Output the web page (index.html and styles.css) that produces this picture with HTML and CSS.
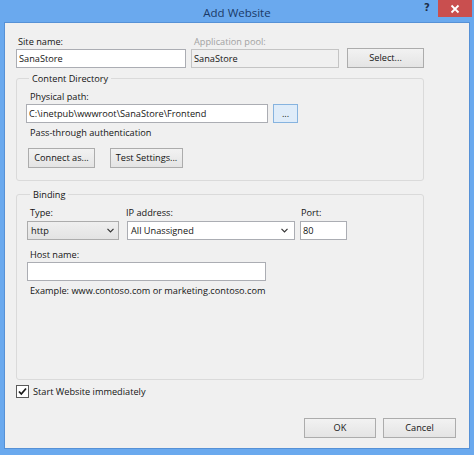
FILE: index.html
```html
<!DOCTYPE html>
<html>
<head>
<meta charset="utf-8">
<link rel="stylesheet" href="styles.css">
</head>
<body>
<div class="window">
  <div class="titlebar">
    <div></div>
    <div class="title">Add Website</div>
    <div class="controls">
      <span class="help">?</span>
      <span class="close"><svg width="10" height="10" viewBox="0 0 10 10"><path d="M1.5 1.5 L8.5 8.5 M8.5 1.5 L1.5 8.5" stroke="#fff" stroke-width="1.8" fill="none"/></svg></span>
    </div>
  </div>
  <div class="client">
    <div class="row-top">
      <div class="field f-site">
        <div class="label l-site">Site name:</div>
        <div class="textbox w-site">SanaStore</div>
      </div>
      <div class="field f-pool">
        <div class="label label-disabled l-pool">Application pool:</div>
        <div class="textbox readonly w-pool">SanaStore</div>
      </div>
      <button class="btn btn-select">Select...</button>
    </div>

    <div class="group group-content">
      <div class="group-title">Content Directory</div>
      <div class="label l-indent">Physical path:</div>
      <div class="path-row">
        <div class="textbox w-path">C:\inetpub\wwwroot\SanaStore\Frontend</div>
        <button class="btn btn-browse">...</button>
      </div>
      <div class="label l-indent l-pass">Pass-through authentication</div>
      <div class="btn-row">
        <button class="btn btn-connect">Connect as...</button>
        <button class="btn btn-test">Test Settings...</button>
      </div>
    </div>

    <div class="group group-binding">
      <div class="group-title">Binding</div>
      <div class="binding-row">
        <div class="field">
          <div class="label l-type">Type:</div>
          <div class="select select-gray w-type"><span>http</span><svg class="chev" width="7" height="5" viewBox="0 0 7 5"><path d="M0.5 0.8 L3.5 3.8 L6.5 0.8" stroke="#333" stroke-width="1.2" fill="none"/></svg></div>
        </div>
        <div class="field f-ip">
          <div class="label l-ip">IP address:</div>
          <div class="select w-ip"><span>All Unassigned</span><svg class="chev" width="7" height="5" viewBox="0 0 7 5"><path d="M0.5 0.8 L3.5 3.8 L6.5 0.8" stroke="#333" stroke-width="1.2" fill="none"/></svg></div>
        </div>
        <div class="field f-port">
          <div class="label l-port">Port:</div>
          <div class="textbox w-port">80</div>
        </div>
      </div>
      <div class="label l-type l-host">Host name:</div>
      <div class="textbox w-host"></div>
      <div class="label l-type l-example">Example: www.contoso.com or marketing.contoso.com</div>
    </div>

    <div class="check-row">
      <span class="checkbox"><svg width="11" height="11" viewBox="0 0 11 11"><path d="M2 5.5 L4.3 8 L9 2.5" stroke="#1a1a1a" stroke-width="1.8" fill="none"/></svg></span>
      <span class="check-label">Start Website immediately</span>
    </div>

    <div class="dialog-buttons">
      <button class="btn btn-ok">OK</button>
      <button class="btn btn-cancel">Cancel</button>
    </div>
  </div>
</div>
</body>
</html>
```

FILE: styles.css
```css
* { box-sizing: border-box; }
html, body { margin: 0; padding: 0; }
body {
  width: 474px;
  height: 455px;
  overflow: hidden;
  font-family: "Open Sans", "Noto Sans", sans-serif;
  font-size: 9.2px;
  color: #141414;
}
.window {
  width: 474px;
  height: 455px;
  background: #6aa9ee;
  padding: 0 5px 7px 5px;
}
.titlebar {
  height: 23px;
  display: grid;
  grid-template-columns: 1fr auto 1fr;
  align-items: start;
}
.title {
  font-size: 11.5px;
  line-height: 23px;
  color: #1a3a68;
  padding-top: 1px;
}
.controls {
  display: flex;
  justify-content: flex-end;
  align-items: flex-start;
  margin-right: -3px;
}
.help {
  font-family: "DejaVu Sans", sans-serif;
  font-weight: bold;
  font-size: 10px;
  line-height: 16px;
  color: #1c2f4a;
  width: 14px;
  text-align: center;
  margin-right: 4px;
}
.close {
  width: 34px;
  height: 17px;
  background: #c94f4f;
  display: flex;
  align-items: center;
  justify-content: center;
}
.client {
  background: #f0f0f0;
  height: 425px;
  padding: 11px 13px 9px 11px;
  box-shadow: 0 0 0 1px rgba(50, 100, 170, 0.35);
}
.label {
  line-height: 15px;
  white-space: nowrap;
}
.label-disabled { color: #a2a2a2; }
.l-site { padding-left: 2px; }
.l-pool { padding-left: 3px; }
.row-top {
  display: flex;
  align-items: flex-end;
}
.textbox {
  height: 19px;
  border: 1px solid #abadb3;
  background: #fff;
  line-height: 17px;
  padding: 0 2px;
  white-space: nowrap;
  overflow: hidden;
}
.textbox.readonly { background: #f0f0f0; border-color: #c4c4c4; }
.w-site { width: 170px; }
.f-pool { margin-left: 5px; }
.w-pool { width: 148px; }
.btn {
  font-family: inherit;
  font-size: 9.2px;
  color: #141414;
  height: 20px;
  padding: 0;
  border: 1px solid #acacac;
  background: linear-gradient(#f2f2f2, #e4e4e4);
  line-height: 18px;
  text-align: center;
  white-space: nowrap;
}
.btn-select { width: 77px; margin-left: 8px; }

.group {
  width: 408px;
  border: 1px solid #dadada;
  border-radius: 3px;
}
.group-title {
  width: max-content;
  line-height: 15px;
  margin: -8px 0 3px 3px;
  padding: 0 3px;
  background: #f0f0f0;
}
.group-content {
  margin-top: 10px;
  padding: 0 0 12px 9px;
}
.l-indent { padding-left: 4px; }
.path-row { display: flex; }
.w-path { width: 242px; }
.btn-browse {
  width: 25px;
  height: 19px;
  line-height: 15px;
  margin-left: 5px;
  border-color: #86b3df;
  background: #dfecf9;
}
.l-pass { margin-top: 2px; }
.btn-row {
  display: flex;
  margin-top: 8px;
  padding-left: 2px;
}
.btn-connect { width: 67px; }
.btn-test { width: 73px; margin-left: 15px; }

.group-binding {
  margin-top: 13px;
  height: 186px;
  padding: 0 0 0 10px;
}
.binding-row {
  display: flex;
}
.binding-row .label { margin-bottom: 1px; }
.l-type { padding-left: 3px; }
.f-ip { margin-left: 8px; }
.l-ip { margin-left: -1px; }
.f-port { margin-left: 5px; }
.l-port { padding-left: 1px; }
.select {
  height: 19px;
  border: 1px solid #abadb3;
  background: #fff;
  line-height: 17px;
  padding: 0 6px 0 3px;
  display: flex;
  align-items: center;
  justify-content: space-between;
}
.select-gray {
  border-color: #acacac;
  background: linear-gradient(#efefef, #e3e3e3);
  padding-right: 4px;
}
.w-type { width: 92px; }
.w-ip { width: 168px; }
.w-port { width: 47px; }
.l-host { margin-top: 7px; }
.w-host { width: 239px; }
.l-example { margin-top: 2px; }

.check-row {
  margin-top: 4px;
  display: flex;
  align-items: center;
  height: 15px;
}
.checkbox {
  width: 13px;
  height: 13px;
  border: 1px solid #5a5a5a;
  background: #fff;
  display: flex;
  align-items: center;
  justify-content: center;
}
.check-label {
  margin-left: 4px;
  line-height: 15px;
}
.dialog-buttons {
  margin-top: 19px;
  display: flex;
  justify-content: flex-end;
}
.btn-ok { width: 72px; }
.btn-cancel { width: 73px; margin-left: 7px; }
```
